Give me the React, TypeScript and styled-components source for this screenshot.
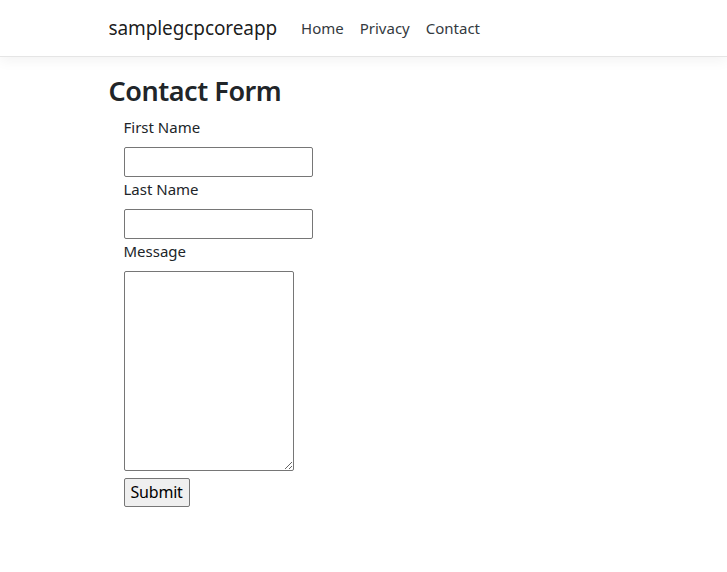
import React from 'react';
import styled, { createGlobalStyle } from 'styled-components';

const GlobalStyle = createGlobalStyle`
  html, body {
    margin: 0;
    padding: 0;
    background: #fff;
  }
  body {
    font-family: "Segoe UI", "Noto Sans", "Open Sans", Roboto, sans-serif;
    font-size: 15px;
    line-height: 24px;
    color: #212529;
  }
`;

const NavBar = styled.header`
  height: 57px;
  box-sizing: border-box;
  border-bottom: 1px solid #e5e5e5;
  box-shadow: 0 4px 12px rgba(0, 0, 0, 0.05);
  margin-bottom: 17px;
`;

const Container = styled.div`
  max-width: 540px;
  margin: 0 auto;
  padding: 0 15px;
  box-sizing: border-box;
`;

const NavInner = styled(Container)`
  display: flex;
  align-items: center;
  height: 100%;
`;

const Brand = styled.a`
  font-size: 19px;
  letter-spacing: -0.1px;
  color: rgba(0, 0, 0, 0.9);
  text-decoration: none;
  margin-right: 16px;
`;

const NavLink = styled.a`
  font-size: 15px;
  color: #343a40;
  text-decoration: none;
  padding: 0 8px;
`;

const Title = styled.h2`
  font-size: 27px;
  font-weight: 600;
  letter-spacing: -0.45px;
  line-height: 33.6px;
  margin: 0 0 7px;
`;

const Form = styled.form`
  padding-left: 15px;
`;

const Field = styled.div``;

const Label = styled.label`
  display: inline-block;
  margin-bottom: 8px;
`;

const TextInput = styled.input`
  font: inherit;
  width: 189px;
  height: 30px;
  box-sizing: border-box;
  border: 1px solid #767676;
  border-radius: 2px;
  padding: 1px 2px;
  margin: 0;
`;

const TextArea = styled.textarea`
  font: inherit;
  width: 170px;
  height: 200px;
  box-sizing: border-box;
  border: 1px solid #767676;
  border-radius: 2px;
  padding: 2px;
  margin: 0;
  resize: both;
  vertical-align: baseline;
`;

const SubmitButton = styled.button`
  font: inherit;
  font-size: 16px;
  margin-top: 1px;
  height: 29px;
  box-sizing: border-box;
  padding: 0 6px;
  letter-spacing: -0.2px;
  background: #efefef;
  color: #000;
  border: 1px solid #767676;
  border-radius: 2px;
`;

export default function App() {
  return (
    <>
      <GlobalStyle />
      <NavBar>
        <NavInner>
          <Brand href="#">samplegcpcoreapp</Brand>
          <NavLink href="#">Home</NavLink>
          <NavLink href="#">Privacy</NavLink>
          <NavLink href="#">Contact</NavLink>
        </NavInner>
      </NavBar>
      <Container>
        <Title>Contact Form</Title>
        <Form>
          <Field>
            <Label htmlFor="firstName">First Name</Label>
            <div>
              <TextInput id="firstName" type="text" />
            </div>
          </Field>
          <Field>
            <Label htmlFor="lastName">Last Name</Label>
            <div>
              <TextInput id="lastName" type="text" />
            </div>
          </Field>
          <Field>
            <Label htmlFor="message">Message</Label>
            <div>
              <TextArea id="message" />
            </div>
          </Field>
          <Field>
            <SubmitButton type="submit">Submit</SubmitButton>
          </Field>
        </Form>
      </Container>
    </>
  );
}
